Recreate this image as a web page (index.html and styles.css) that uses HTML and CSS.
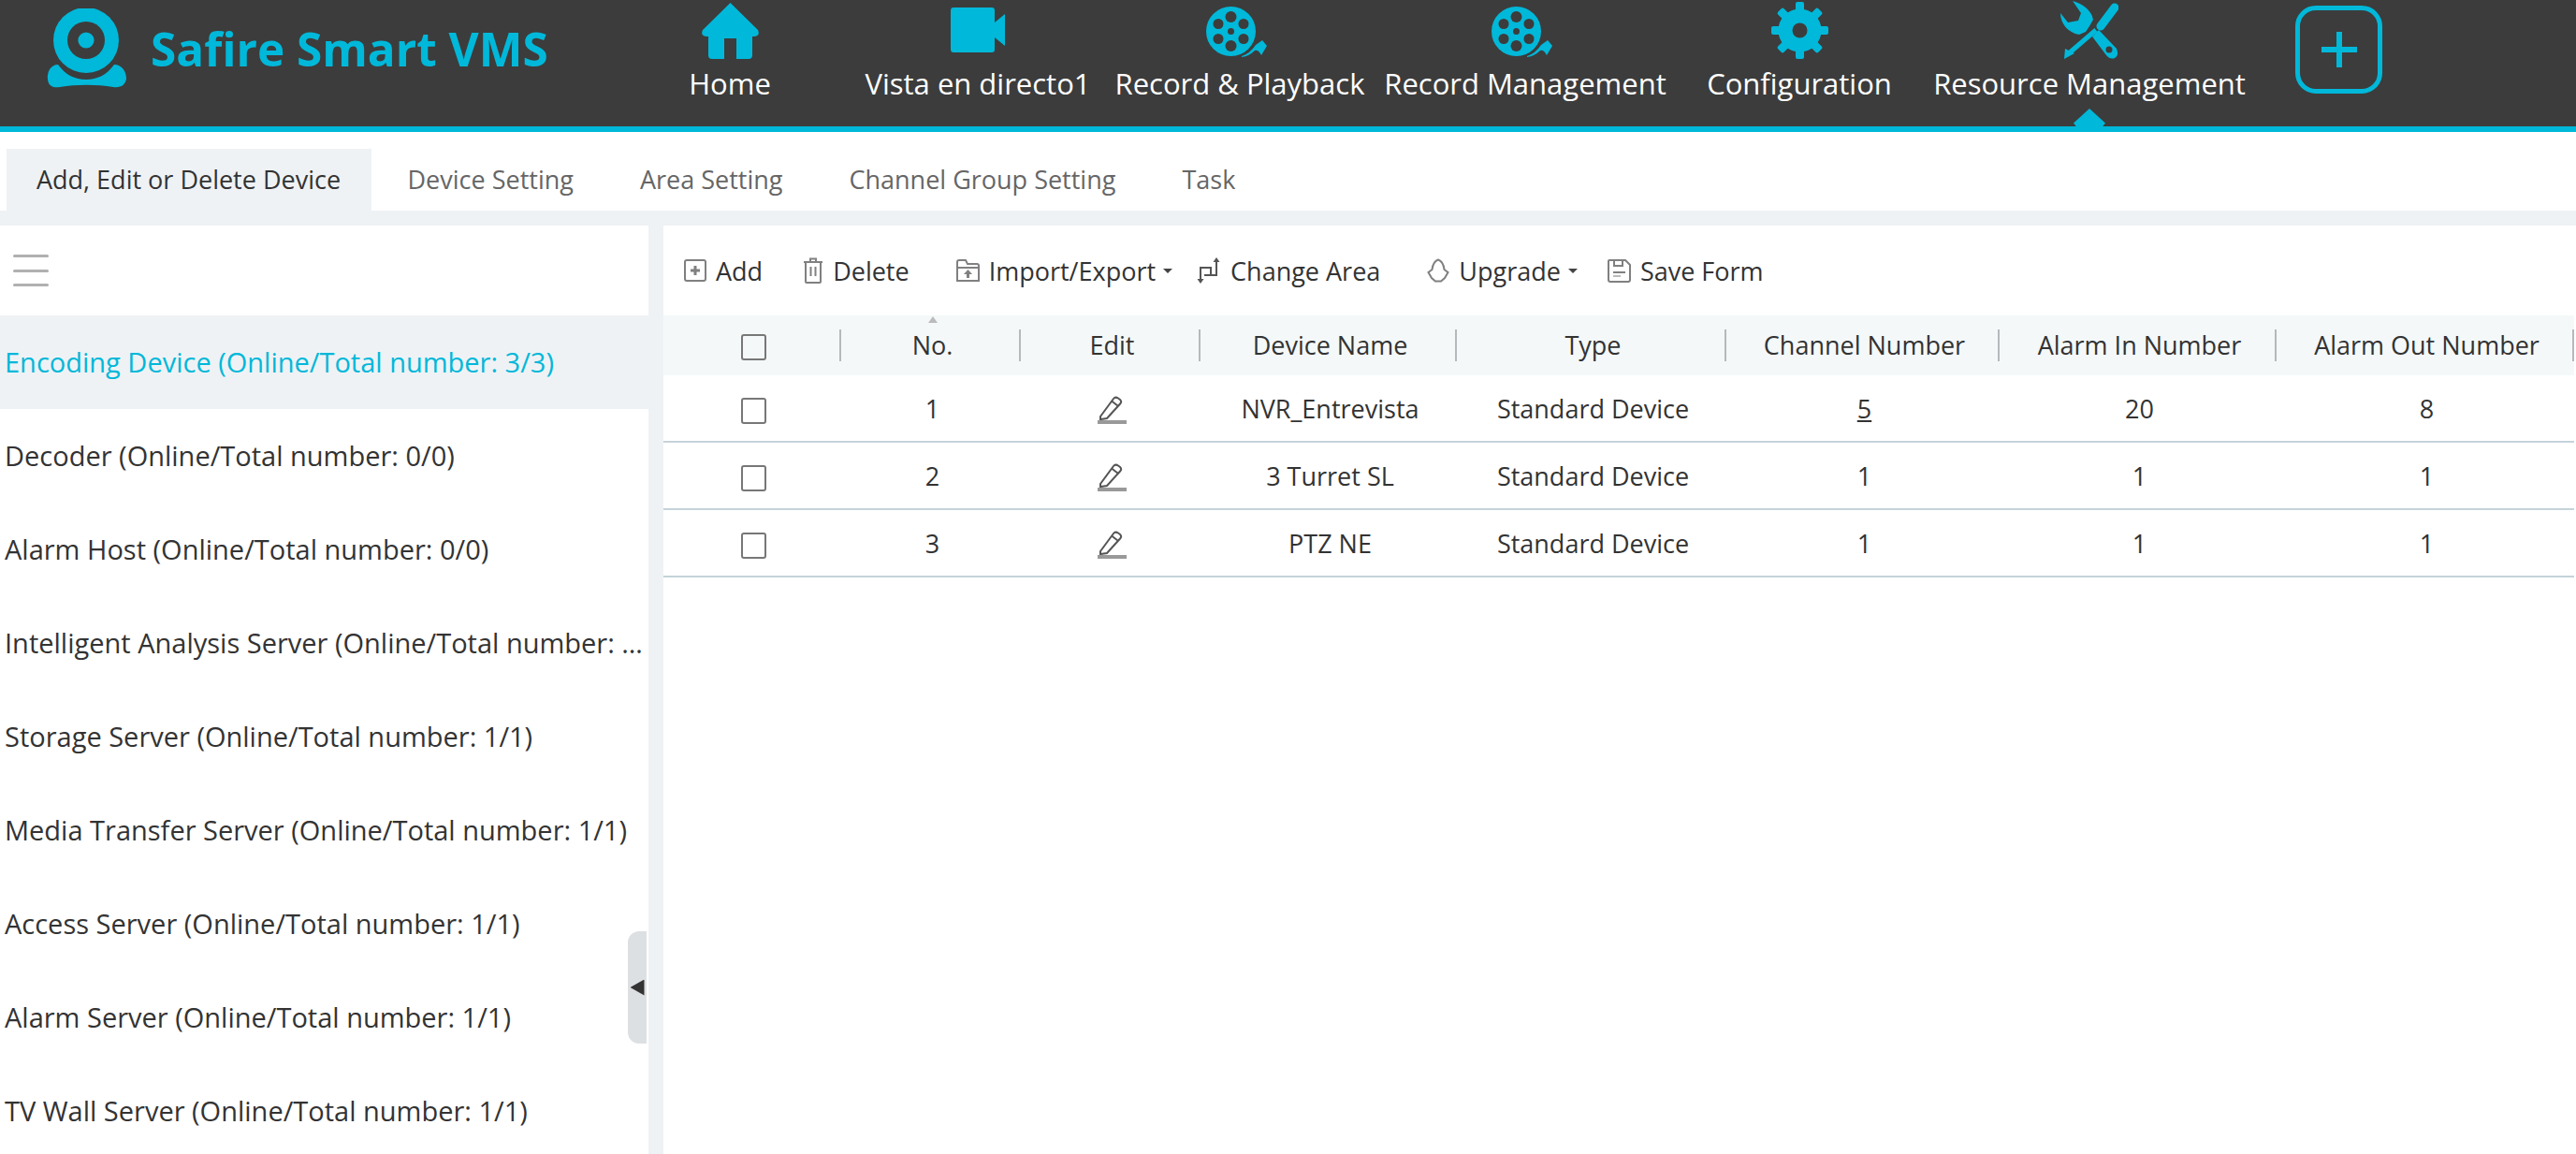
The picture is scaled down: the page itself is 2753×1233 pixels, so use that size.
FILE: index.html
```html
<!DOCTYPE html>
<html lang="en">
<head>
<meta charset="utf-8">
<title>Safire Smart VMS</title>
<link rel="stylesheet" href="styles.css">
</head>
<body>
<div class="page">
  <header class="topbar">
    <div class="brand">
      <svg class="logo" viewBox="0 0 85 85" width="85" height="85">
        <path class="cy" d="M12 60 C4 60 0 68 1 76 C2 84 8 85 14 84 C32 81 53 81 71 84 C79 85 84 82 85 75 C85 67 80 60 72 60 C64 71 54 76 42 76 C30 76 20 71 12 60Z"/>
        <circle class="cy" cx="42" cy="34" r="35"/>
        <circle class="dk" cx="42" cy="34" r="20"/>
        <circle class="cy" cx="42" cy="34" r="8.6"/>
      </svg>
      <span class="brand-name">Safire Smart VMS</span>
    </div>
    <nav class="nav">
      <a class="nav-item n1">
        <svg class="nav-icon" viewBox="0 0 61 60" width="61" height="60"><path class="cy" d="M30.500 0 L60 29 Q63 36 55 36 L54 36 V56 Q54 60 50 60 H37 V38 H24 V60 H11 Q7 60 7 56 V36 H6 Q-2 36 1 29 Z"/></svg>
        <span>Home</span>
      </a>
      <a class="nav-item n2">
        <svg class="nav-icon cam" viewBox="0 0 58 48" width="58" height="48"><rect class="cy" x="0" y="0" width="47" height="48" rx="3"/><path class="cy" d="M47 16 L58 7 V41 L47 32Z"/></svg>
        <span>Vista en directo1</span>
      </a>
      <a class="nav-item n3">
        <svg class="nav-icon reel" viewBox="0 0 65 54" width="65" height="54"><use href="#reel"/></svg>
        <span>Record &amp; Playback</span>
      </a>
      <a class="nav-item n4">
        <svg class="nav-icon reel" viewBox="0 0 65 54" width="65" height="54"><use href="#reel"/></svg>
        <span>Record Management</span>
      </a>
      <a class="nav-item n5">
        <svg class="nav-icon gear" viewBox="0 0 63 61" width="63" height="61">
          <circle class="ring" cx="31.500" cy="30.500" r="15.500"/>
          <g class="cy">
            <rect x="27" y="0" width="9" height="14" rx="2"/>
            <rect x="27" y="0" width="9" height="14" rx="2" transform="rotate(45 31.500 30.500)"/>
            <rect x="27" y="0" width="9" height="14" rx="2" transform="rotate(90 31.500 30.500)"/>
            <rect x="27" y="0" width="9" height="14" rx="2" transform="rotate(135 31.500 30.500)"/>
            <rect x="27" y="0" width="9" height="14" rx="2" transform="rotate(180 31.500 30.500)"/>
            <rect x="27" y="0" width="9" height="14" rx="2" transform="rotate(225 31.500 30.500)"/>
            <rect x="27" y="0" width="9" height="14" rx="2" transform="rotate(270 31.500 30.500)"/>
            <rect x="27" y="0" width="9" height="14" rx="2" transform="rotate(315 31.500 30.500)"/>
          </g>
        </svg>
        <span>Configuration</span>
      </a>
      <a class="nav-item n6 active">
        <svg class="nav-icon" viewBox="0 0 62 62" width="62" height="62">
          <path class="cy" d="M13 0 C23 3 33 9 35 20 L31 27 L27 33 L20 36 C8 34 0 24 0 13 L8 23 L19 21 L22 13 Z"/>
          <path class="cy" d="M34 38 L41 31 L60 51 Q63 58 58 61 Q53 63 49 58 Z"/>
          <circle class="dk" cx="52" cy="52" r="3.500"/>
          <path class="tool-handle" d="M58 7 L43 27"/>
          <path class="tool-shaft" d="M38 31 L9 56"/>
          <path class="cy" d="M4 62 L5 51 L15 56 Z"/>
        </svg>
        <span>Resource Management</span>
      </a>
      <button class="add-view" type="button" aria-label="Add">
        <svg viewBox="0 0 38 38" width="38" height="38"><path class="cy" d="M16 0 H22 V16 H38 V22 H22 V38 H16 V22 H0 V16 H16Z"/></svg>
      </button>
    </nav>
  </header>

  <svg class="defs" width="0" height="0">
    <defs>
      <g id="reel">
        <circle class="cy" cx="26.500" cy="26.500" r="26.500"/>
        <circle class="dk" cx="26.500" cy="11" r="6"/>
        <circle class="dk" cx="26.500" cy="42" r="6"/>
        <circle class="dk" cx="13" cy="18.500" r="5.500"/>
        <circle class="dk" cx="40" cy="18.500" r="5.500"/>
        <circle class="dk" cx="13" cy="34.500" r="5.500"/>
        <circle class="dk" cx="40" cy="34.500" r="5.500"/>
        <circle class="dk" cx="26.500" cy="26.500" r="3.500"/>
        <path class="cy" d="M38 53 Q47 50 53 41 L60 36 L65 42 L59 52 Q56 46 52 47 Q46 53 38 54Z"/>
      </g>
    </defs>
  </svg>

  <div class="tabs">
    <a class="tab tab-active">Add, Edit or Delete Device</a>
    <a class="tab">Device Setting</a>
    <a class="tab">Area Setting</a>
    <a class="tab">Channel Group Setting</a>
    <a class="tab">Task</a>
  </div>

  <main class="workspace">
    <aside class="sidebar">
      <div class="side-head">
        <div class="burger"><i></i><i></i><i></i></div>
      </div>
      <ul class="side-list">
        <li class="side-item current">Encoding Device (Online/Total number: 3/3)</li>
        <li class="side-item">Decoder (Online/Total number: 0/0)</li>
        <li class="side-item">Alarm Host (Online/Total number: 0/0)</li>
        <li class="side-item">Intelligent Analysis Server (Online/Total number: 0/0)</li>
        <li class="side-item">Storage Server (Online/Total number: 1/1)</li>
        <li class="side-item">Media Transfer Server (Online/Total number: 1/1)</li>
        <li class="side-item">Access Server (Online/Total number: 1/1)</li>
        <li class="side-item">Alarm Server (Online/Total number: 1/1)</li>
        <li class="side-item">TV Wall Server (Online/Total number: 1/1)</li>
      </ul>
      <div class="collapse"><span class="collapse-arrow"></span></div>
    </aside>

    <section class="panel">
      <div class="toolbar">
        <a class="tool t-add">
          <svg viewBox="0 0 24 24" width="24" height="24"><rect class="ic" x="1" y="1" width="22" height="22" rx="2"/><path class="ic-fill" d="M10.500 7 H13.500 V10.500 H17 V13.500 H13.500 V17 H10.500 V13.500 H7 V10.500 H10.500Z"/></svg>
          <span>Add</span>
        </a>
        <a class="tool t-del">
          <svg viewBox="0 0 22 28" width="22" height="28"><path class="ic" d="M1 5 H21 M8 5 V1.500 H14 V5 M3 5 V26 Q3 27 4 27 H18 Q19 27 19 26 V5 M8.500 10 V20 M13.500 10 V20"/></svg>
          <span>Delete</span>
        </a>
        <a class="tool t-imp">
          <svg viewBox="0 0 25 24" width="25" height="24"><path class="ic" d="M1 23 V3 Q1 1 3 1 H10 L12 5 H22 Q24 5 24 7 V23 Z M1 9 H24"/><path class="ic-fill" d="M12.500 11 L17 16 H14 V20 H11 V16 H8Z"/></svg>
          <span>Import/Export</span>
          <i class="caret"></i>
        </a>
        <a class="tool t-chg">
          <svg viewBox="0 0 27 28" width="27" height="28"><path class="ic thin" d="M5 25 V11 H16 V19 M9 19 H22 V4"/><path class="ic-fill dark" d="M1.500 23 H8.500 L5 28Z M18.500 5 H25.500 L22 0Z"/></svg>
          <span>Change Area</span>
        </a>
        <a class="tool t-upg">
          <svg viewBox="0 0 24 26" width="24" height="26"><path class="ic" d="M12 1.500 C7 3 6 8 5.500 12 L1.500 15 L5 21 L9 24.500 H15 L19 21 L22.500 15 L18.500 12 C18 8 17 3 12 1.500Z"/></svg>
          <span>Upgrade</span>
          <i class="caret"></i>
        </a>
        <a class="tool t-save">
          <svg viewBox="0 0 25 25" width="25" height="25"><path class="ic" d="M2 1 H19 L24 6 V22 Q24 24 22 24 H3 Q1 24 1 22 V2 Q1 1 2 1Z M7 1 V7 H16 V1 M6 14 H19"/><path class="ic light" d="M6 18 H14"/></svg>
          <span>Save Form</span>
        </a>
      </div>
      <table class="grid">
        <colgroup>
          <col class="c-check"><col class="c-no"><col class="c-edit"><col class="c-name"><col class="c-type"><col class="c-chan"><col class="c-in"><col class="c-out">
        </colgroup>
        <thead>
          <tr>
            <th><span class="check"></span></th>
            <th class="sorted">No.</th>
            <th>Edit</th>
            <th>Device Name</th>
            <th>Type</th>
            <th>Channel Number</th>
            <th>Alarm In Number</th>
            <th>Alarm Out Number</th>
          </tr>
        </thead>
        <tbody>
          <tr>
            <td><span class="check"></span></td>
            <td>1</td>
            <td><svg class="pen" viewBox="0 0 31 30" width="31" height="30"><use href="#pen"/></svg></td>
            <td>NVR_Entrevista</td>
            <td>Standard Device</td>
            <td><span class="link">5</span></td>
            <td>20</td>
            <td>8</td>
          </tr>
          <tr>
            <td><span class="check"></span></td>
            <td>2</td>
            <td><svg class="pen" viewBox="0 0 31 30" width="31" height="30"><use href="#pen"/></svg></td>
            <td>3 Turret SL</td>
            <td>Standard Device</td>
            <td>1</td>
            <td>1</td>
            <td>1</td>
          </tr>
          <tr>
            <td><span class="check"></span></td>
            <td>3</td>
            <td><svg class="pen" viewBox="0 0 31 30" width="31" height="30"><use href="#pen"/></svg></td>
            <td>PTZ NE</td>
            <td>Standard Device</td>
            <td>1</td>
            <td>1</td>
            <td>1</td>
          </tr>
        </tbody>
      </table>
      <svg class="defs" width="0" height="0">
        <defs>
          <g id="pen">
            <path class="pen-line" d="M3 22 L17 3 Q19 0.500 22 2.500 L24 4 Q26 6 24.500 8 L10 24 L3 25 Z M15 5.500 L21.500 10.500"/>
            <rect class="pen-base" x="0" y="26" width="31" height="4"/>
          </g>
        </defs>
      </svg>
    </section>
  </main>
</div>
</body>
</html>
```
FILE: styles.css
```css
* { box-sizing: border-box; }
html, body { margin: 0; padding: 0; }
body {
  width: 2753px;
  height: 1233px;
  overflow: hidden;
  background: #eff2f5;
  color: #333;
  font-family: "Open Sans", "Noto Sans", "Liberation Sans", sans-serif;
  font-size: 27px;
}
.page { display: flex; flex-direction: column; width: 2753px; height: 1233px; }
.defs { position: absolute; }
.cy { fill: #00b8d9; }
.dk { fill: #3c3c3c; }

/* top bar */
.topbar {
  display: flex;
  height: 141px;
  flex: none;
  background: #3c3c3c;
  border-bottom: 6px solid #00b8d9;
}
.brand { display: flex; width: 660px; padding: 9px 0 0 50px; align-items: flex-start; }
.logo { flex: none; }
.brand-name {
  margin: 12px 0 0 26px;
  color: #00b8d9;
  font-size: 49.500px;
  font-weight: 700;
  line-height: 62px;
  white-space: nowrap;
}
.nav {
  display: grid;
  grid-template-columns: 240px 290px 270px 340px 246px 374px 93px;
  flex: 1;
}
.nav-item {
  position: relative;
  display: flex;
  flex-direction: column;
  align-items: center;
  height: 135px;
  color: #fff;
  font-size: 31px;
  line-height: 40px;
  white-space: nowrap;
}
.nav-item span { position: absolute; top: 69px; }
.nav-icon { margin-top: 3px; }
.cam { margin-top: 8px; }
.reel { margin-top: 7px; margin-right: 8px; }
.gear { margin-top: 2px; }
.active .nav-icon { margin-top: 1px; }
.ring { fill: none; stroke: #00b8d9; stroke-width: 15; }
.tool-handle { fill: none; stroke: #00b8d9; stroke-width: 9; stroke-linecap: round; }
.tool-shaft { fill: none; stroke: #00b8d9; stroke-width: 5; }
.active::after {
  content: "";
  position: absolute;
  left: calc(50% - 17px);
  top: 116px;
  width: 34px;
  height: 19px;
  background: #00b8d9;
  clip-path: polygon(50% 0, 100% 82%, 92% 100%, 8% 100%, 0 82%);
}
.add-view {
  display: flex;
  align-items: center;
  justify-content: center;
  width: 93px;
  height: 94px;
  margin: 6px 0 0 33px;
  padding: 0;
  background: none;
  border: 5px solid #00b8d9;
  border-radius: 22px;
}

/* tabs */
.tabs { display: flex; height: 84px; flex: none; padding: 18px 0 0 7px; background: #fff; }
.tab {
  display: flex;
  align-items: center;
  padding: 0 35.500px 2px;
  color: #666;
  white-space: nowrap;
}
.tab-active { width: 390px; padding: 0 0 2px 32px; margin-right: 3px; background: #eff2f5; color: #333; }

/* workspace */
.workspace { display: flex; flex: 1; gap: 16px; min-height: 0; padding-top: 16px; }
.sidebar { position: relative; width: 693px; flex: none; background: #fff; }
.side-head { display: flex; align-items: center; height: 96px; padding-left: 14px; }
.burger { display: flex; flex-direction: column; gap: 12.500px; width: 38px; }
.burger i { display: block; height: 3px; border-radius: 2px; background: #b0b0b0; }
.side-list { margin: 0; padding: 0; list-style: none; }
.side-item {
  height: 100px;
  padding: 0 6px 0 5px;
  overflow: hidden;
  font-size: 29px;
  line-height: 100px;
  text-overflow: ellipsis;
  white-space: nowrap;
}
.current { background: #eff2f5; color: #00b8d9; }
.collapse {
  position: absolute;
  left: 671px;
  top: 754px;
  display: flex;
  align-items: center;
  justify-content: center;
  width: 20px;
  height: 120px;
  background: #dde0e3;
  border-radius: 12px 0 0 12px;
}
.collapse-arrow {
  width: 15px;
  height: 17px;
  background: #333;
  clip-path: polygon(0 50%, 100% 0, 100% 100%);
}

/* panel */
.panel { flex: 1; min-width: 0; background: #fff; }
.toolbar { display: flex; align-items: center; height: 96px; padding-left: 22px; color: #333; }
.tool { display: flex; align-items: center; gap: 10px; white-space: nowrap; }
.t-del { margin-left: 43px; }
.t-imp { margin-left: 50px; }
.t-chg { margin-left: 25px; }
.t-upg { margin-left: 50px; }
.t-save { margin-left: 32px; }
.ic { fill: none; stroke: #808080; stroke-width: 2; }
.thin { stroke: #555; }
.light { stroke: #bbb; }
.ic-fill { fill: #808080; }
.dark { fill: #555; }
.caret {
  width: 0;
  height: 0;
  margin-left: -2px;
  border-style: solid;
  border-width: 5px 5px 0;
  border-color: #444 transparent transparent;
}

/* table */
.grid { width: 2042px; border-collapse: separate; border-spacing: 0; table-layout: fixed; }
.c-check { width: 190px; }
.c-no { width: 192px; }
.c-edit { width: 192px; }
.c-name { width: 274px; }
.c-type { width: 288px; }
.c-chan { width: 292px; }
.c-in { width: 296px; }
.c-out { width: 318px; }
.grid th, .grid td { text-align: center; font-weight: 400; white-space: nowrap; }
.grid th { position: relative; height: 64px; padding: 0 0 2px 3px; background: #f4f8f9; }
.grid th::after {
  content: "";
  position: absolute;
  right: 0;
  top: 15px;
  width: 2px;
  height: 34px;
  background: #b5b9bb;
}
.sorted::before {
  content: "";
  position: absolute;
  left: 93px;
  top: 1px;
  border-style: solid;
  border-width: 0 5.500px 7px;
  border-color: transparent transparent #bbb;
}
.grid td { height: 72px; padding: 0 0 0 3px; border-bottom: 2px solid #c5d3da; }
.check {
  display: inline-block;
  width: 27px;
  height: 28px;
  border: 2px solid #777;
  border-radius: 3px;
  vertical-align: middle;
}
.pen { display: inline-block; vertical-align: middle; margin-top: -2px; }
.pen-line { fill: none; stroke: #555; stroke-width: 2; }
.pen-base { fill: #999; }
.link { text-decoration: underline; }
```
